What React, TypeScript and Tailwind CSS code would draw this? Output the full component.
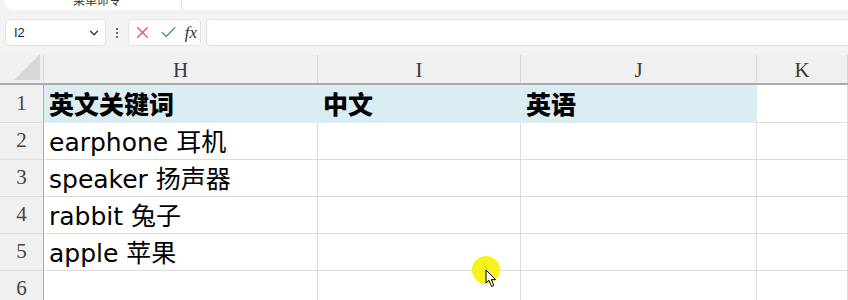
import { ChevronDown, X, Check } from "lucide-react";

const cols = [
  { key: "H", w: "w-[274px]" },
  { key: "I", w: "w-[203px]" },
  { key: "J", w: "w-[236px]" },
  { key: "K", w: "flex-1" },
];

const rows: string[][] = [
  ["英文关键词", "中文", "英语", ""],
  ["earphone 耳机", "", "", ""],
  ["speaker 扬声器", "", "", ""],
  ["rabbit 兔子", "", "", ""],
  ["apple 苹果", "", "", ""],
  ["", "", "", ""],
];

const serif = "font-['Liberation_Serif','Noto_Serif_CJK_SC',serif]";
const sans = "font-['DejaVu_Sans','Noto_Sans_CJK_SC',sans-serif]";

function FormulaBar() {
  return (
    <div className="h-[45px] bg-[#f3f3f3] flex items-center pl-[5px]">
      <div className="w-[101px] h-[27px] bg-white border border-[#e3e3e3] rounded-[4px] flex items-center justify-between pl-[8px] pr-[4px]">
        <span className="text-[13px] text-[#222] font-['Liberation_Sans',sans-serif]">I2</span>
        <ChevronDown size={14} strokeWidth={2.2} className="text-[#333]" />
      </div>
      <div className="w-[22px] flex flex-col items-center gap-[2px]">
        <span className="w-[2px] h-[2px] bg-[#444] rounded-full" />
        <span className="w-[2px] h-[2px] bg-[#444] rounded-full" />
        <span className="w-[2px] h-[2px] bg-[#444] rounded-full" />
      </div>
      <div className="w-[73px] h-[27px] bg-white border border-[#e3e3e3] rounded-[4px] flex items-center justify-between pl-[4px] pr-[3px]">
        <X size={19} strokeWidth={1.6} className="text-[#ec4c4f]" />
        <Check size={19} strokeWidth={1.6} className="text-[#33a852]" />
        <span className="italic text-[17px] leading-none text-[#333] font-['Liberation_Serif',serif]">fx</span>
      </div>
      <div className="ml-[5px] flex-1 h-[27px] bg-white border border-[#e3e3e3] rounded-l-[4px] border-r-0" />
    </div>
  );
}

function TopStrip() {
  return (
    <div className="h-[10px] bg-[#f3f3f3] pl-[5px] overflow-hidden">
      <div className="h-[10px] bg-white rounded-bl-[6px] shadow-[0_1px_1px_rgba(0,0,0,0.08)] relative overflow-hidden">
        <span className="absolute left-[68px] top-[-6px] text-[12px] leading-[12px] text-[#333] font-['Noto_Sans_CJK_SC',sans-serif]">菜单命令</span>
        <span className="absolute left-[176px] top-0 h-[10px] w-px bg-[#ddd]" />
      </div>
    </div>
  );
}

function HeaderRow() {
  return (
    <div className="flex h-[30px] bg-[#f0f0f0] border-b-2 border-[#ababab]">
      <div className="w-[44px] h-full relative border-r border-[#d8d8d8]">
        <svg className="absolute right-[3px] bottom-[3px]" width="26" height="26" viewBox="0 0 26 26">
          <polygon points="26,0 26,26 0,26" fill="#d8d8d8" />
        </svg>
      </div>
      {cols.map((c) => (
        <div
          key={c.key}
          className={`${c.w} h-full flex items-end justify-center pb-[2px] border-r border-[#d8d8d8] text-[21px] leading-none text-[#3b3b3b] ${serif}`}
        >
          {c.key}
        </div>
      ))}
    </div>
  );
}

function Cursor() {
  return (
    <div className="absolute left-[472px] top-[256px] w-[28px] h-[28px] rounded-full bg-[#f8f21c]">
      <svg className="absolute left-[13px] top-[13px]" width="13" height="20" viewBox="0 0 13 20">
        <path d="M1 1 L1 14 L4 11.3 L6.6 17.5 L8.8 16.5 L6.3 10.6 L10.5 10.6 Z" fill="white" stroke="black" strokeWidth="1" strokeLinejoin="round" />
      </svg>
    </div>
  );
}

export default function App() {
  return (
    <div className="w-[848px] h-[300px] overflow-hidden bg-white relative">
      <TopStrip />
      <FormulaBar />
      <HeaderRow />
      {rows.map((r, i) => (
        <div key={i} className={`flex ${i === 0 ? "h-[38px]" : "h-[37px]"}`}>
          <div className={`w-[44px] shrink-0 bg-[#f0f0f0] border-r border-[#ababab] border-b border-b-[#dcdcdc] flex items-center justify-center text-[21px] text-[#444] ${serif}`}>
            {i + 1}
          </div>
          {cols.map((c, j) => {
            const head = i === 0 && j < 3;
            return (
              <div
                key={c.key}
                className={`${c.w} shrink-0 flex items-center pl-[5px] whitespace-nowrap text-black ${
                  head
                    ? "bg-[#daedf3] font-extrabold text-[25px] border-b border-[#daedf3] font-['Noto_Sans_CJK_SC',sans-serif]"
                    : `text-[25px] pt-[3px] border-r border-b border-[#dcdcdc] ${sans}`
                } ${head && j === 2 ? "border-r border-r-[#daedf3]" : ""}`}
              >
                {r[j]}
              </div>
            );
          })}
        </div>
      ))}
      <Cursor />
    </div>
  );
}
